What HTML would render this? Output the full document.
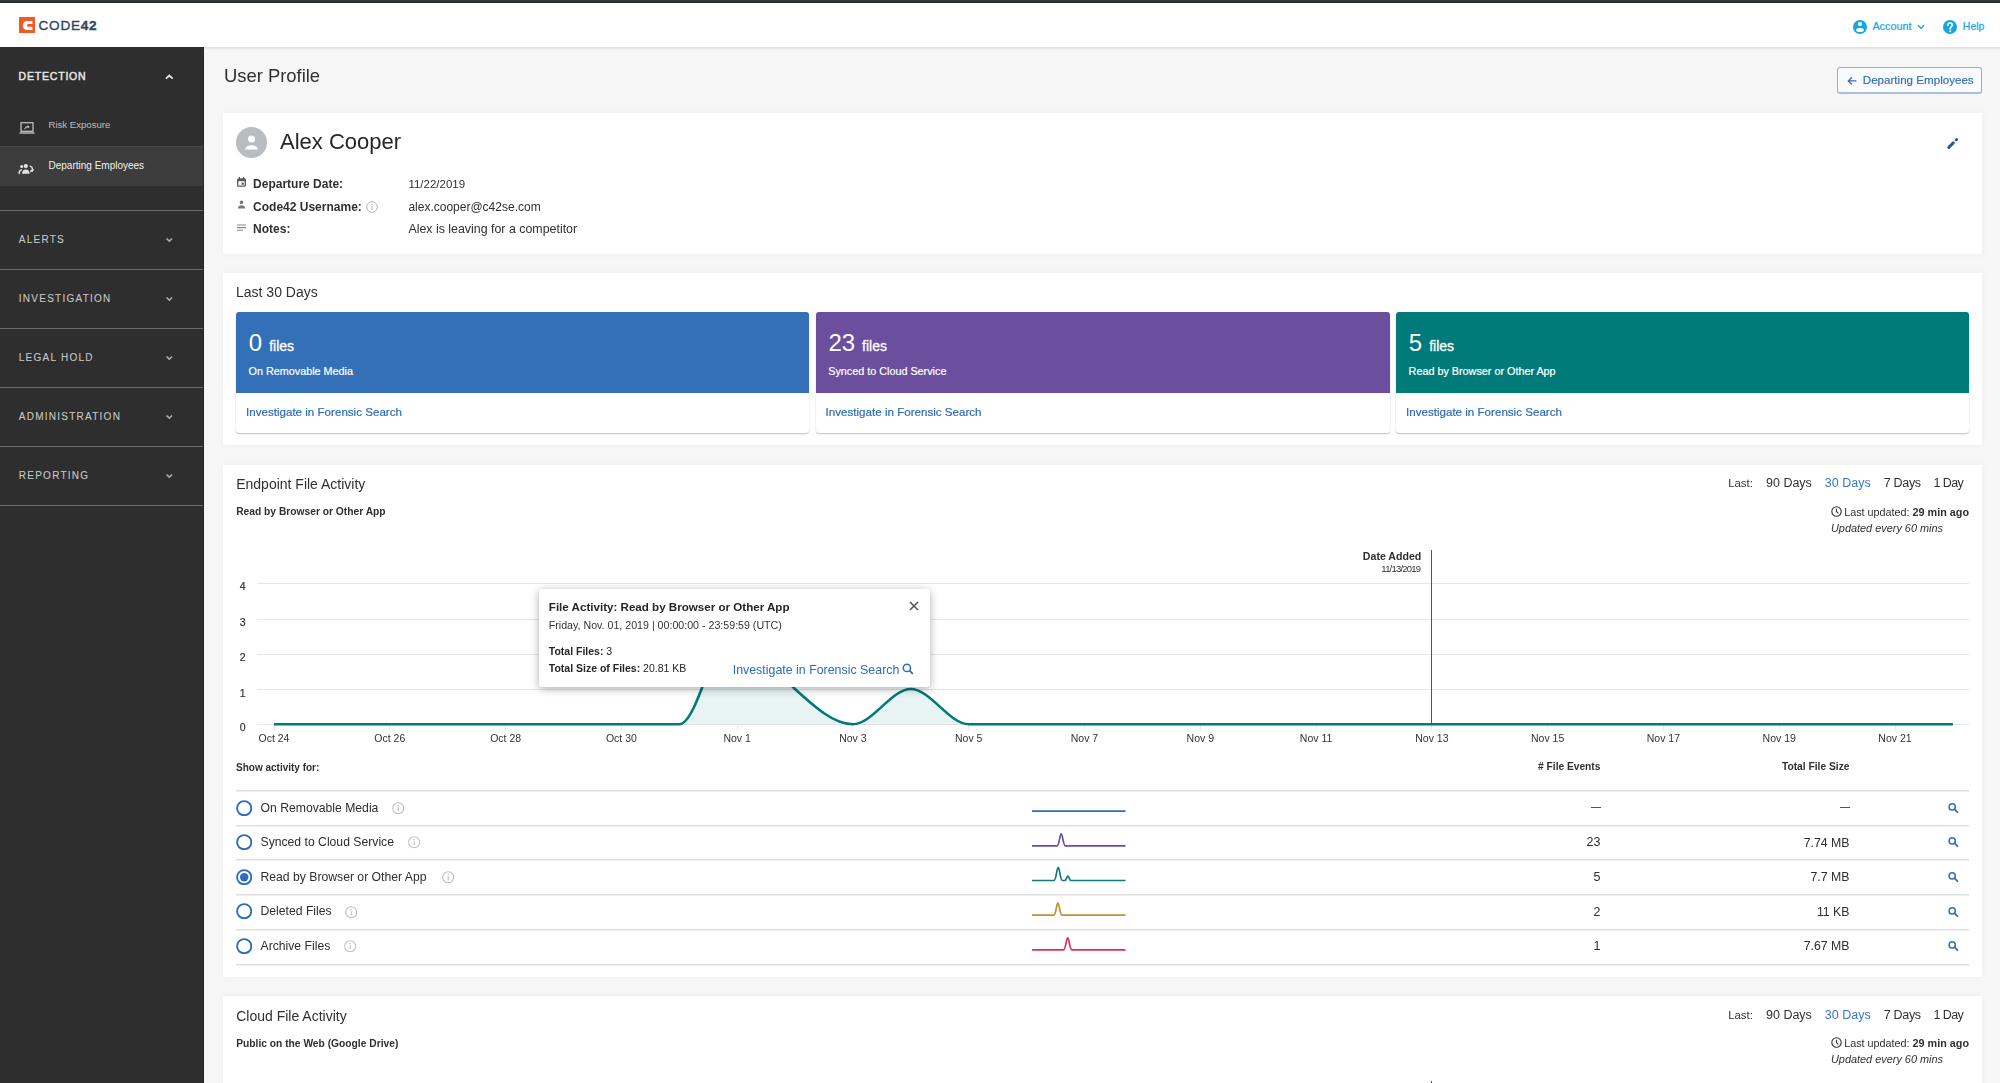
<!DOCTYPE html>
<html><head><meta charset="utf-8"><title>Code42 User Profile</title>
<style>
html,body{margin:0;padding:0;}
body{width:2000px;height:1083px;overflow:hidden;position:relative;background:#f6f6f6;font-family:"Liberation Sans",sans-serif;}
.t{position:absolute;white-space:nowrap;}
b{font-weight:700;}
</style></head><body>
<div id="pg" style="position:absolute;left:0;top:0;width:2000px;height:1083px;filter:blur(0.35px)">
<div style="position:absolute;left:0px;top:0px;width:2000px;height:3.3px;background:linear-gradient(#3b4043,#1f2325)"></div>
<div style="position:absolute;left:0px;top:3px;width:2000px;height:44px;background:#fff"></div>
<div style="position:absolute;left:204px;top:47px;width:1796px;height:2.5px;background:linear-gradient(#dedede,#f1f1f1)"></div>
<svg style="position:absolute;left:19px;top:17px" width="16" height="16" viewBox="0 0 16 16">
<rect width="16" height="16" fill="#f15a24"/>
<path d="M13.4 4 L8.4 4 C5.5 4 3.8 6 3.8 8.5 C3.8 11 5.5 13 8.4 13 L13.4 13 L13.4 9.8 L9.4 9.8 C8.6 9.8 8.1 9.2 8.1 8.4 C8.1 7.6 8.6 7.1 9.4 7.1 L13.4 7.1 Z" fill="#fff"/>
</svg>
<div class="t" style="left:38.5px;top:19.0px;font-size:13.6px;line-height:13.6px;color:#33475b;letter-spacing:0.75px;-webkit-text-stroke:0.35px #33475b">CODE<b style="font-weight:700">42</b></div>
<svg style="position:absolute;left:1853px;top:19.5px" width="14" height="14" viewBox="0 0 14 14">
<circle cx="7" cy="7" r="7" fill="#14a6e2"/>
<circle cx="7" cy="4.1" r="2.1" fill="#fff"/>
<ellipse cx="7" cy="10.1" rx="3.9" ry="2.0" fill="#fff"/>
</svg>
<div class="t" style="left:1872.4px;top:20.7px;font-size:10.8px;line-height:10.8px;color:#14a6e2;-webkit-text-stroke:0.2px #14a6e2">Account</div>
<svg style="position:absolute;left:1917px;top:23.5px" width="8" height="6" viewBox="0 0 8 6"><path d="M1 1.2 L4 4.2 L7 1.2" stroke="#14a6e2" stroke-width="1.4" fill="none"/></svg>
<svg style="position:absolute;left:1943px;top:19.5px" width="14" height="14" viewBox="0 0 14 14">
<circle cx="7" cy="7" r="7" fill="#14a6e2"/>
<path d="M4.9 5.2 C4.9 3.8 5.9 3.0 7.1 3.0 C8.4 3.0 9.3 3.9 9.3 5.0 C9.3 6.5 7.2 6.8 7.2 8.7" stroke="#fff" stroke-width="1.7" fill="none" stroke-linecap="round"/>
<circle cx="7.2" cy="11.3" r="1.0" fill="#fff"/>
</svg>
<div class="t" style="left:1962.8px;top:20.9px;font-size:10.5px;line-height:10.5px;color:#14a6e2;-webkit-text-stroke:0.2px #14a6e2">Help</div>
<div style="position:absolute;left:0px;top:47px;width:204px;height:1036px;background:#2e2e2e"></div>
<div class="t" style="left:18.6px;top:70.7px;font-size:10.5px;line-height:10.5px;color:#e6e6e6;letter-spacing:0.8px;-webkit-text-stroke:0.45px #e6e6e6">DETECTION</div>
<svg style="position:absolute;left:165px;top:73.5px" width="9" height="6" viewBox="0 0 9 6"><path d="M0.9 4.6 L4.3 1.5 L7.7 4.6" stroke="#e4e4e4" stroke-width="1.8" fill="none"/></svg>
<svg style="position:absolute;left:18.5px;top:122px" width="16" height="12" viewBox="0 0 16 12">
<rect x="2" y="0.7" width="12" height="8.6" fill="none" stroke="#bdbdbd" stroke-width="1.3"/>
<path d="M0.5 11 L15.5 11" stroke="#bdbdbd" stroke-width="1.4"/>
<path d="M5.5 7 L7.5 4.8 L9.5 4.8 M8.6 3.6 L9.8 4.8 L8.6 6" stroke="#bdbdbd" stroke-width="1.1" fill="none"/>
</svg>
<div class="t" style="left:48.5px;top:120.2px;font-size:9.6px;line-height:9.6px;color:#bdbdbd;">Risk Exposure</div>
<div style="position:absolute;left:0px;top:146px;width:202.5px;height:40px;background:#3d3d3d"></div>
<div style="position:absolute;left:0px;top:146px;width:202.5px;height:1.2px;background:#474747"></div>
<svg style="position:absolute;left:18px;top:161.5px" width="17" height="13" viewBox="0 0 17 13">
<circle cx="7.8" cy="4.1" r="2.1" fill="#e2e2e2"/>
<path d="M3.9 11.8 C4.1 9.1 5.7 7.6 7.8 7.6 C9.9 7.6 11.5 9.1 11.7 11.8 Z" fill="#e2e2e2"/>
<circle cx="3.7" cy="4.6" r="1.5" fill="#e2e2e2"/>
<path d="M1.1 11.4 C1.2 9.5 2 8.3 3.3 8.1" stroke="#e2e2e2" stroke-width="1.5" fill="none" stroke-linecap="round"/>
<path d="M12.2 4.2 C13.6 4.6 14.4 5.6 14.4 7 C14.4 8.2 13.8 9 12.8 9.6" stroke="#e2e2e2" stroke-width="1.4" fill="none" stroke-linecap="round"/>
<path d="M15.6 7.4 L14.4 9.2 L12.6 8.4" stroke="#e2e2e2" stroke-width="1.1" fill="none"/>
</svg>
<div class="t" style="left:48.5px;top:160.5px;font-size:10px;line-height:10px;color:#f2f2f2;">Departing Employees</div>
<div style="position:absolute;left:0px;top:210.3px;width:204px;height:1.2px;background:#6c6c6c"></div>
<div class="t" style="left:18.8px;top:234.8px;font-size:10.0px;line-height:10.0px;color:#c6c6c6;letter-spacing:1.25px;-webkit-text-stroke:0.1px #c6c6c6">ALERTS</div>
<svg style="position:absolute;left:165px;top:237.3px" width="9" height="6" viewBox="0 0 9 6"><path d="M1.5 1.5 L4.3 4.2 L7.1 1.5" stroke="#ababab" stroke-width="1.6" fill="none"/></svg>
<div style="position:absolute;left:0px;top:269.3px;width:204px;height:1.2px;background:#6c6c6c"></div>
<div class="t" style="left:18.8px;top:293.8px;font-size:10.0px;line-height:10.0px;color:#c6c6c6;letter-spacing:1.25px;-webkit-text-stroke:0.1px #c6c6c6">INVESTIGATION</div>
<svg style="position:absolute;left:165px;top:296.3px" width="9" height="6" viewBox="0 0 9 6"><path d="M1.5 1.5 L4.3 4.2 L7.1 1.5" stroke="#ababab" stroke-width="1.6" fill="none"/></svg>
<div style="position:absolute;left:0px;top:328.3px;width:204px;height:1.2px;background:#6c6c6c"></div>
<div class="t" style="left:18.8px;top:352.8px;font-size:10.0px;line-height:10.0px;color:#c6c6c6;letter-spacing:1.25px;-webkit-text-stroke:0.1px #c6c6c6">LEGAL HOLD</div>
<svg style="position:absolute;left:165px;top:355.3px" width="9" height="6" viewBox="0 0 9 6"><path d="M1.5 1.5 L4.3 4.2 L7.1 1.5" stroke="#ababab" stroke-width="1.6" fill="none"/></svg>
<div style="position:absolute;left:0px;top:387.3px;width:204px;height:1.2px;background:#6c6c6c"></div>
<div class="t" style="left:18.8px;top:411.8px;font-size:10.0px;line-height:10.0px;color:#c6c6c6;letter-spacing:1.25px;-webkit-text-stroke:0.1px #c6c6c6">ADMINISTRATION</div>
<svg style="position:absolute;left:165px;top:414.3px" width="9" height="6" viewBox="0 0 9 6"><path d="M1.5 1.5 L4.3 4.2 L7.1 1.5" stroke="#ababab" stroke-width="1.6" fill="none"/></svg>
<div style="position:absolute;left:0px;top:446.3px;width:204px;height:1.2px;background:#6c6c6c"></div>
<div class="t" style="left:18.8px;top:470.8px;font-size:10.0px;line-height:10.0px;color:#c6c6c6;letter-spacing:1.25px;-webkit-text-stroke:0.1px #c6c6c6">REPORTING</div>
<svg style="position:absolute;left:165px;top:473.3px" width="9" height="6" viewBox="0 0 9 6"><path d="M1.5 1.5 L4.3 4.2 L7.1 1.5" stroke="#ababab" stroke-width="1.6" fill="none"/></svg>
<div style="position:absolute;left:0px;top:505.3px;width:204px;height:1.2px;background:#6c6c6c"></div>
<div style="position:absolute;left:202.5px;top:47px;width:1.5px;height:1036px;background:#262626"></div>
<div class="t" style="left:224.0px;top:67.2px;font-size:18.4px;line-height:18.4px;color:#303030;">User Profile</div>
<div style="position:absolute;left:1837px;top:67px;width:145px;height:27.4px;box-sizing:border-box;border:1px solid #8db0da;border-bottom:2px solid #a9c1de;border-radius:3px;background:#f9fafc"></div>
<svg style="position:absolute;left:1847px;top:75.5px" width="10" height="10" viewBox="0 0 10 10"><path d="M9.4 4.9 L1.4 4.9 M4.9 1.3 L1.3 4.9 L4.9 8.5" stroke="#2f6cb6" stroke-width="1.25" fill="none"/></svg>
<div class="t" style="left:1862.8px;top:74.2px;font-size:11.6px;line-height:11.6px;color:#2f6cb6;-webkit-text-stroke:0.15px #2f6cb6">Departing Employees</div>
<div style="position:absolute;left:223px;top:113px;width:1759px;height:140.6px;background:#fff;box-shadow:0 0 7px rgba(0,0,0,0.045)"></div>
<svg style="position:absolute;left:235.5px;top:126.5px" width="31" height="31" viewBox="0 0 31 31">
<circle cx="15.5" cy="15.5" r="15.5" fill="#b9bdc1"/>
<circle cx="15.5" cy="12" r="3.6" fill="#fff"/>
<path d="M9.2 22.5 C9.6 19.6 12 18.3 15.5 18.3 C19 18.3 21.4 19.6 21.8 22.5 Z" fill="#fff"/>
</svg>
<div class="t" style="left:280.0px;top:131.0px;font-size:22px;line-height:22px;color:#262626;">Alex Cooper</div>
<svg style="position:absolute;left:1946px;top:137px" width="13" height="13" viewBox="0 0 13 13"><path d="M2.7 10.5 L7.3 5.9" stroke="#2356a6" stroke-width="3" stroke-linecap="round"/><path d="M10.1 3.1 L10.7 2.5" stroke="#2356a6" stroke-width="2.6" stroke-linecap="round"/></svg>
<div class="t" style="left:253.1px;top:178.0px;font-size:12px;line-height:12px;font-weight:700;color:#303030;">Departure Date:</div>
<div class="t" style="left:408.4px;top:178.5px;font-size:11.5px;line-height:11.5px;color:#303030;">11/22/2019</div>
<div class="t" style="left:253.1px;top:200.6px;font-size:12px;line-height:12px;font-weight:700;color:#303030;">Code42 Username:</div>
<div class="t" style="left:408.4px;top:200.6px;font-size:12px;line-height:12px;color:#303030;">alex.cooper@c42se.com</div>
<div class="t" style="left:253.1px;top:223.0px;font-size:12px;line-height:12px;font-weight:700;color:#303030;">Notes:</div>
<div class="t" style="left:408.4px;top:222.7px;font-size:12.4px;line-height:12.4px;color:#303030;">Alex is leaving for a competitor</div>
<svg style="position:absolute;left:237px;top:176.6px" width="9" height="10" viewBox="0 0 9 10"><rect x="0.7" y="2.2" width="7.6" height="7" rx="0.8" fill="none" stroke="#5a5a5a" stroke-width="1.3"/><rect x="0.7" y="1.6" width="7.6" height="2.6" fill="#5a5a5a"/><rect x="1.8" y="0" width="1.2" height="2" fill="#5a5a5a"/><rect x="6" y="0" width="1.2" height="2" fill="#5a5a5a"/><rect x="4.6" y="5.6" width="2.2" height="2.2" fill="#5a5a5a"/></svg>
<svg style="position:absolute;left:237px;top:200px" width="9" height="9" viewBox="0 0 9 9"><circle cx="4.5" cy="2.4" r="1.8" fill="#777"/><path d="M0.8 8.5 C1 6 2.6 5.2 4.5 5.2 C6.4 5.2 8 6 8.2 8.5Z" fill="#777"/></svg>
<svg style="position:absolute;left:237px;top:224px" width="9" height="8" viewBox="0 0 9 8"><path d="M0 1 H9 M0 3.6 H9 M0 6.2 H6" stroke="#888" stroke-width="1.1"/></svg>
<svg style="position:absolute;left:366px;top:201px" width="12" height="12" viewBox="0 0 12 12"><circle cx="6" cy="6" r="5.3" fill="none" stroke="#b5b5b5" stroke-width="1"/><path d="M6 5.2 V9" stroke="#b5b5b5" stroke-width="1.1"/><circle cx="6" cy="3.4" r="0.7" fill="#b5b5b5"/></svg>
<div style="position:absolute;left:223px;top:273px;width:1759px;height:172px;background:#fff;box-shadow:0 0 7px rgba(0,0,0,0.045)"></div>
<div class="t" style="left:236.0px;top:284.9px;font-size:14px;line-height:14px;color:#303030;">Last 30 Days</div>
<div style="position:absolute;left:236px;top:312px;width:573px;height:121px;background:#fff;border-radius:3px;box-shadow:0 1px 1.5px rgba(0,0,0,0.26)"></div>
<div style="position:absolute;left:236px;top:312px;width:573px;height:80.5px;background:#3470b8;border-radius:3px 3px 0 0"></div>
<div class="t" style="left:248.8px;top:331.3px;font-size:24px;line-height:24px;color:#fff;">0<span style="font-size:14px;margin-left:7px;-webkit-text-stroke:0.3px #fff">files</span></div>
<div class="t" style="left:248.6px;top:365.8px;font-size:10.8px;line-height:10.8px;color:#fff;-webkit-text-stroke:0.2px #fff">On Removable Media</div>
<div class="t" style="left:246.0px;top:405.9px;font-size:11.6px;line-height:11.6px;color:#2f6cb6;-webkit-text-stroke:0.2px #2f6cb6">Investigate in Forensic Search</div>
<div style="position:absolute;left:815.6px;top:312px;width:574px;height:121px;background:#fff;border-radius:3px;box-shadow:0 1px 1.5px rgba(0,0,0,0.26)"></div>
<div style="position:absolute;left:815.6px;top:312px;width:574px;height:80.5px;background:#6c4e9e;border-radius:3px 3px 0 0"></div>
<div class="t" style="left:828.4px;top:331.3px;font-size:24px;line-height:24px;color:#fff;">23<span style="font-size:14px;margin-left:7px;-webkit-text-stroke:0.3px #fff">files</span></div>
<div class="t" style="left:828.2px;top:365.8px;font-size:10.8px;line-height:10.8px;color:#fff;-webkit-text-stroke:0.2px #fff">Synced to Cloud Service</div>
<div class="t" style="left:825.6px;top:405.9px;font-size:11.6px;line-height:11.6px;color:#2f6cb6;-webkit-text-stroke:0.2px #2f6cb6">Investigate in Forensic Search</div>
<div style="position:absolute;left:1396px;top:312px;width:573.2px;height:121px;background:#fff;border-radius:3px;box-shadow:0 1px 1.5px rgba(0,0,0,0.26)"></div>
<div style="position:absolute;left:1396px;top:312px;width:573.2px;height:80.5px;background:#007b79;border-radius:3px 3px 0 0"></div>
<div class="t" style="left:1408.8px;top:331.3px;font-size:24px;line-height:24px;color:#fff;">5<span style="font-size:14px;margin-left:7px;-webkit-text-stroke:0.3px #fff">files</span></div>
<div class="t" style="left:1408.6px;top:365.8px;font-size:10.8px;line-height:10.8px;color:#fff;-webkit-text-stroke:0.2px #fff">Read by Browser or Other App</div>
<div class="t" style="left:1406.0px;top:405.9px;font-size:11.6px;line-height:11.6px;color:#2f6cb6;-webkit-text-stroke:0.2px #2f6cb6">Investigate in Forensic Search</div>
<div style="position:absolute;left:223px;top:465px;width:1759px;height:512px;background:#fff;box-shadow:0 0 7px rgba(0,0,0,0.045)"></div>
<div class="t" style="left:236.2px;top:477.3px;font-size:14px;line-height:14px;color:#303030;">Endpoint File Activity</div>
<div class="t" style="left:236.2px;top:507.3px;font-size:10.25px;line-height:10.25px;font-weight:700;color:#303030;">Read by Browser or Other App</div>
<div class="t" style="left:1728.2px;top:478.3px;font-size:11.4px;line-height:11.4px;color:#303030;">Last:</div>
<div class="t" style="left:1766.0px;top:477.4px;font-size:12.5px;line-height:12.5px;color:#303030;">90 Days</div>
<div class="t" style="left:1824.8px;top:477.4px;font-size:12.5px;line-height:12.5px;color:#3a78c4;">30 Days</div>
<div class="t" style="left:1883.7px;top:477.4px;font-size:12.5px;line-height:12.5px;color:#303030;letter-spacing:-0.3px">7 Days</div>
<div class="t" style="left:1933.4px;top:477.4px;font-size:12.5px;line-height:12.5px;color:#303030;letter-spacing:-0.55px">1 Day</div>
<svg style="position:absolute;left:1831px;top:506px" width="11" height="11" viewBox="0 0 11 11"><circle cx="5.5" cy="5.5" r="4.7" fill="none" stroke="#333" stroke-width="1.1"/><path d="M5.5 2.8 V5.6 L7.4 7.4" stroke="#333" stroke-width="1.1" fill="none"/></svg>
<div class="t" style="right:31.0px;top:506.5px;font-size:10.8px;line-height:10.8px;color:#303030;">Last updated: <b>29 min ago</b></div>
<div class="t" style="left:1831.0px;top:523.2px;font-size:10.9px;line-height:10.9px;color:#303030;font-style:italic">Updated every 60 mins</div>
<div style="position:absolute;left:256.6px;top:723.7px;width:1712.4px;height:1px;background:#e6e6e6"></div>
<div class="t" style="right:1754.4px;top:721.9px;font-size:10.5px;line-height:10.5px;color:#333;-webkit-text-stroke:0.2px #333">0</div>
<div style="position:absolute;left:256.6px;top:689.3px;width:1712.4px;height:1px;background:#e6e6e6"></div>
<div class="t" style="right:1754.4px;top:687.5px;font-size:10.5px;line-height:10.5px;color:#333;-webkit-text-stroke:0.2px #333">1</div>
<div style="position:absolute;left:256.6px;top:654.0px;width:1712.4px;height:1px;background:#e6e6e6"></div>
<div class="t" style="right:1754.4px;top:652.2px;font-size:10.5px;line-height:10.5px;color:#333;-webkit-text-stroke:0.2px #333">2</div>
<div style="position:absolute;left:256.6px;top:619.1px;width:1712.4px;height:1px;background:#e6e6e6"></div>
<div class="t" style="right:1754.4px;top:617.3px;font-size:10.5px;line-height:10.5px;color:#333;-webkit-text-stroke:0.2px #333">3</div>
<div style="position:absolute;left:256.6px;top:582.9px;width:1712.4px;height:1px;background:#e6e6e6"></div>
<div class="t" style="right:1754.4px;top:581.1px;font-size:10.5px;line-height:10.5px;color:#333;-webkit-text-stroke:0.2px #333">4</div>
<div style="position:absolute;left:273.5px;top:724.5px;width:1px;height:5px;background:#e6e6e6"></div>
<div class="t" style="left:74.0px;width:400px;text-align:center;top:733.3px;font-size:10.5px;line-height:10.5px;color:#333;">Oct 24</div>
<div style="position:absolute;left:389.3px;top:724.5px;width:1px;height:5px;background:#e6e6e6"></div>
<div class="t" style="left:189.8px;width:400px;text-align:center;top:733.3px;font-size:10.5px;line-height:10.5px;color:#333;">Oct 26</div>
<div style="position:absolute;left:505.1px;top:724.5px;width:1px;height:5px;background:#e6e6e6"></div>
<div class="t" style="left:305.6px;width:400px;text-align:center;top:733.3px;font-size:10.5px;line-height:10.5px;color:#333;">Oct 28</div>
<div style="position:absolute;left:620.9px;top:724.5px;width:1px;height:5px;background:#e6e6e6"></div>
<div class="t" style="left:421.4px;width:400px;text-align:center;top:733.3px;font-size:10.5px;line-height:10.5px;color:#333;">Oct 30</div>
<div style="position:absolute;left:736.6px;top:724.5px;width:1px;height:5px;background:#e6e6e6"></div>
<div class="t" style="left:537.1px;width:400px;text-align:center;top:733.3px;font-size:10.5px;line-height:10.5px;color:#333;">Nov 1</div>
<div style="position:absolute;left:852.4px;top:724.5px;width:1px;height:5px;background:#e6e6e6"></div>
<div class="t" style="left:652.9px;width:400px;text-align:center;top:733.3px;font-size:10.5px;line-height:10.5px;color:#333;">Nov 3</div>
<div style="position:absolute;left:968.2px;top:724.5px;width:1px;height:5px;background:#e6e6e6"></div>
<div class="t" style="left:768.7px;width:400px;text-align:center;top:733.3px;font-size:10.5px;line-height:10.5px;color:#333;">Nov 5</div>
<div style="position:absolute;left:1084.0px;top:724.5px;width:1px;height:5px;background:#e6e6e6"></div>
<div class="t" style="left:884.5px;width:400px;text-align:center;top:733.3px;font-size:10.5px;line-height:10.5px;color:#333;">Nov 7</div>
<div style="position:absolute;left:1199.8px;top:724.5px;width:1px;height:5px;background:#e6e6e6"></div>
<div class="t" style="left:1000.3px;width:400px;text-align:center;top:733.3px;font-size:10.5px;line-height:10.5px;color:#333;">Nov 9</div>
<div style="position:absolute;left:1315.6px;top:724.5px;width:1px;height:5px;background:#e6e6e6"></div>
<div class="t" style="left:1116.1px;width:400px;text-align:center;top:733.3px;font-size:10.5px;line-height:10.5px;color:#333;">Nov 11</div>
<div style="position:absolute;left:1431.4px;top:724.5px;width:1px;height:5px;background:#e6e6e6"></div>
<div class="t" style="left:1231.9px;width:400px;text-align:center;top:733.3px;font-size:10.5px;line-height:10.5px;color:#333;">Nov 13</div>
<div style="position:absolute;left:1547.1px;top:724.5px;width:1px;height:5px;background:#e6e6e6"></div>
<div class="t" style="left:1347.6px;width:400px;text-align:center;top:733.3px;font-size:10.5px;line-height:10.5px;color:#333;">Nov 15</div>
<div style="position:absolute;left:1662.9px;top:724.5px;width:1px;height:5px;background:#e6e6e6"></div>
<div class="t" style="left:1463.4px;width:400px;text-align:center;top:733.3px;font-size:10.5px;line-height:10.5px;color:#333;">Nov 17</div>
<div style="position:absolute;left:1778.7px;top:724.5px;width:1px;height:5px;background:#e6e6e6"></div>
<div class="t" style="left:1579.2px;width:400px;text-align:center;top:733.3px;font-size:10.5px;line-height:10.5px;color:#333;">Nov 19</div>
<div style="position:absolute;left:1894.5px;top:724.5px;width:1px;height:5px;background:#e6e6e6"></div>
<div class="t" style="left:1695.0px;width:400px;text-align:center;top:733.3px;font-size:10.5px;line-height:10.5px;color:#333;">Nov 21</div>
<svg style="position:absolute;left:0;top:0" width="2000" height="1083"><path d="M274.0,724.2 C293.3,724.2 312.6,724.2 331.9,724.2 C351.2,724.2 370.5,724.2 389.8,724.2 C409.1,724.2 428.4,724.2 447.7,724.2 C467.0,724.2 486.3,724.2 505.6,724.2 C524.9,724.2 544.2,724.2 563.5,724.2 C582.8,724.2 602.1,724.2 621.4,724.2 C640.7,724.2 660.0,724.2 679.3,724.2 C698.5,724.2 717.8,618.5 737.1,618.5 C756.4,618.5 775.7,671.4 795.0,689.0 C814.3,706.6 833.6,724.2 852.9,724.2 C872.2,724.2 891.5,689.0 910.8,689.0 C930.1,689.0 949.4,724.2 968.7,724.2 C988.0,724.2 1007.3,724.2 1026.6,724.2 C1045.9,724.2 1065.2,724.2 1084.5,724.2 C1103.8,724.2 1123.1,724.2 1142.4,724.2 C1161.7,724.2 1181.0,724.2 1200.3,724.2 C1219.6,724.2 1238.9,724.2 1258.2,724.2 C1277.5,724.2 1296.8,724.2 1316.1,724.2 C1335.4,724.2 1354.7,724.2 1374.0,724.2 C1393.3,724.2 1412.6,724.2 1431.9,724.2 C1451.2,724.2 1470.5,724.2 1489.8,724.2 C1509.1,724.2 1528.3,724.2 1547.6,724.2 C1566.9,724.2 1586.2,724.2 1605.5,724.2 C1624.8,724.2 1644.1,724.2 1663.4,724.2 C1682.7,724.2 1702.0,724.2 1721.3,724.2 C1740.6,724.2 1759.9,724.2 1779.2,724.2 C1798.5,724.2 1817.8,724.2 1837.1,724.2 C1856.4,724.2 1875.7,724.2 1895.0,724.2 C1914.3,724.2 1933.6,724.2 1952.9,724.2 L1952.9,724.2 L274.0,724.2 Z" fill="rgba(0,123,121,0.09)"/><path d="M274.0,724.2 C293.3,724.2 312.6,724.2 331.9,724.2 C351.2,724.2 370.5,724.2 389.8,724.2 C409.1,724.2 428.4,724.2 447.7,724.2 C467.0,724.2 486.3,724.2 505.6,724.2 C524.9,724.2 544.2,724.2 563.5,724.2 C582.8,724.2 602.1,724.2 621.4,724.2 C640.7,724.2 660.0,724.2 679.3,724.2 C698.5,724.2 717.8,618.5 737.1,618.5 C756.4,618.5 775.7,671.4 795.0,689.0 C814.3,706.6 833.6,724.2 852.9,724.2 C872.2,724.2 891.5,689.0 910.8,689.0 C930.1,689.0 949.4,724.2 968.7,724.2 C988.0,724.2 1007.3,724.2 1026.6,724.2 C1045.9,724.2 1065.2,724.2 1084.5,724.2 C1103.8,724.2 1123.1,724.2 1142.4,724.2 C1161.7,724.2 1181.0,724.2 1200.3,724.2 C1219.6,724.2 1238.9,724.2 1258.2,724.2 C1277.5,724.2 1296.8,724.2 1316.1,724.2 C1335.4,724.2 1354.7,724.2 1374.0,724.2 C1393.3,724.2 1412.6,724.2 1431.9,724.2 C1451.2,724.2 1470.5,724.2 1489.8,724.2 C1509.1,724.2 1528.3,724.2 1547.6,724.2 C1566.9,724.2 1586.2,724.2 1605.5,724.2 C1624.8,724.2 1644.1,724.2 1663.4,724.2 C1682.7,724.2 1702.0,724.2 1721.3,724.2 C1740.6,724.2 1759.9,724.2 1779.2,724.2 C1798.5,724.2 1817.8,724.2 1837.1,724.2 C1856.4,724.2 1875.7,724.2 1895.0,724.2 C1914.3,724.2 1933.6,724.2 1952.9,724.2" fill="none" stroke="#007b79" stroke-width="2.6" stroke-linecap="butt"/></svg>
<div style="position:absolute;left:1431px;top:550px;width:1.2px;height:175px;background:#555"></div>
<div class="t" style="right:578.7px;top:551.0px;font-size:10.6px;line-height:10.6px;font-weight:700;color:#303030;">Date Added</div>
<div class="t" style="right:579.8px;top:564.2px;font-size:9.5px;line-height:9.5px;color:#333;letter-spacing:-0.8px">11/13/2019</div>
<div style="position:absolute;left:538.8px;top:589.4px;width:391.5px;height:97.6px;background:#fff;border-radius:3px;box-shadow:0 2px 8px rgba(0,0,0,0.32)"></div>
<div class="t" style="left:548.8px;top:601.3px;font-size:11.6px;line-height:11.6px;font-weight:700;color:#262626;">File Activity: Read by Browser or Other App</div>
<svg style="position:absolute;left:909px;top:600.5px" width="10" height="10" viewBox="0 0 10 10"><path d="M1 1 L9 9 M9 1 L1 9" stroke="#585858" stroke-width="1.6"/></svg>
<div class="t" style="left:548.8px;top:620.0px;font-size:10.65px;line-height:10.65px;color:#333;">Friday, Nov. 01, 2019 | 00:00:00 - 23:59:59 (UTC)</div>
<div class="t" style="left:548.8px;top:646.1px;font-size:10.5px;line-height:10.5px;color:#262626;"><b>Total Files:</b> 3</div>
<div class="t" style="left:548.8px;top:663.3px;font-size:10.5px;line-height:10.5px;color:#262626;"><b>Total Size of Files:</b> 20.81 KB</div>
<div class="t" style="left:732.7px;top:663.5px;font-size:12.4px;line-height:12.4px;color:#2f6cb6;">Investigate in Forensic Search</div>
<svg style="position:absolute;left:902px;top:663px" width="12" height="12" viewBox="0 0 12 12"><circle cx="4.9" cy="4.9" r="3.6" fill="none" stroke="#2f6cb6" stroke-width="1.5"/><path d="M7.6 7.6 L10.8 10.8" stroke="#2f6cb6" stroke-width="1.8"/></svg>
<div class="t" style="left:236.0px;top:762.9px;font-size:10px;line-height:10px;font-weight:700;color:#303030;">Show activity for:</div>
<div class="t" style="right:399.6px;top:762.0px;font-size:10.2px;line-height:10.2px;font-weight:700;color:#303030;"># File Events</div>
<div class="t" style="right:150.5px;top:761.9px;font-size:10.25px;line-height:10.25px;font-weight:700;color:#303030;">Total File Size</div>
<div style="position:absolute;left:236px;top:790px;width:1733px;height:1px;background:#dedede"></div>
<div style="position:absolute;left:236px;top:791px;width:1733px;height:0.6px;background:#efefef"></div>
<div style="position:absolute;left:236px;top:825px;width:1733px;height:1px;background:#dedede"></div>
<div style="position:absolute;left:236px;top:826px;width:1733px;height:0.6px;background:#efefef"></div>
<div style="position:absolute;left:236px;top:859px;width:1733px;height:1px;background:#dedede"></div>
<div style="position:absolute;left:236px;top:860px;width:1733px;height:0.6px;background:#efefef"></div>
<div style="position:absolute;left:236px;top:894px;width:1733px;height:1px;background:#dedede"></div>
<div style="position:absolute;left:236px;top:895px;width:1733px;height:0.6px;background:#efefef"></div>
<div style="position:absolute;left:236px;top:929px;width:1733px;height:1px;background:#dedede"></div>
<div style="position:absolute;left:236px;top:930px;width:1733px;height:0.6px;background:#efefef"></div>
<div style="position:absolute;left:236px;top:964px;width:1733px;height:1px;background:#dedede"></div>
<div style="position:absolute;left:236px;top:965px;width:1733px;height:0.6px;background:#efefef"></div>
<svg style="position:absolute;left:235.5px;top:799.5px" width="16.4" height="16.4" viewBox="0 0 16.4 16.4"><circle cx="8.2" cy="8.2" r="7.1" fill="none" stroke="#2f6cc0" stroke-width="1.9"/></svg>
<div class="t" style="left:260.5px;top:801.5px;font-size:12.2px;line-height:12.2px;color:#2e2e2e;">On Removable Media</div>
<svg style="position:absolute;left:391.7px;top:801.7px" width="12.4" height="12.4" viewBox="0 0 12 12"><circle cx="6" cy="6" r="5.3" fill="none" stroke="#bdbdbd" stroke-width="1"/><path d="M6 5.2 V9" stroke="#bdbdbd" stroke-width="1.1"/><circle cx="6" cy="3.4" r="0.7" fill="#bdbdbd"/></svg>
<svg style="position:absolute;left:0;top:0;overflow:visible" width="1" height="1"><path d="M1032,811.1 L1125.5,811.1" fill="none" stroke="#2f6bc0" stroke-width="1.7"/></svg>
<div style="position:absolute;left:1590.5px;top:807.4px;width:10px;height:1.1px;background:#555"></div>
<div style="position:absolute;left:1839.5px;top:807.4px;width:10px;height:1.1px;background:#555"></div>
<svg style="position:absolute;left:1946.5px;top:801.7px" width="12" height="12" viewBox="0 0 12 12"><circle cx="5.2" cy="4.9" r="3.1" fill="none" stroke="#3570bb" stroke-width="1.5"/><path d="M7.4 7.2 L10.4 10.2" stroke="#3570bb" stroke-width="1.8" stroke-linecap="round"/></svg>
<svg style="position:absolute;left:235.5px;top:834.1px" width="16.4" height="16.4" viewBox="0 0 16.4 16.4"><circle cx="8.2" cy="8.2" r="7.1" fill="none" stroke="#2f6cc0" stroke-width="1.9"/></svg>
<div class="t" style="left:260.5px;top:836.1px;font-size:12.2px;line-height:12.2px;color:#2e2e2e;">Synced to Cloud Service</div>
<svg style="position:absolute;left:408.1px;top:836.3px" width="12.4" height="12.4" viewBox="0 0 12 12"><circle cx="6" cy="6" r="5.3" fill="none" stroke="#bdbdbd" stroke-width="1"/><path d="M6 5.2 V9" stroke="#bdbdbd" stroke-width="1.1"/><circle cx="6" cy="3.4" r="0.7" fill="#bdbdbd"/></svg>
<svg style="position:absolute;left:0;top:0;overflow:visible" width="1" height="1"><path d="M1032,845.8 L1057.0,845.8 C1059.3,845.8 1059.7,833.8 1061.2,833.8 C1062.7,833.8 1063.1,845.8 1065.4,845.8 L1125.5,845.8" fill="none" stroke="#6b4e9f" stroke-width="1.7"/></svg>
<div class="t" style="right:399.6px;top:836.3px;font-size:12.5px;line-height:12.5px;color:#2e2e2e;">23</div>
<div class="t" style="right:150.5px;top:836.5px;font-size:12.3px;line-height:12.3px;color:#2e2e2e;">7.74 MB</div>
<svg style="position:absolute;left:1946.5px;top:836.3px" width="12" height="12" viewBox="0 0 12 12"><circle cx="5.2" cy="4.9" r="3.1" fill="none" stroke="#3570bb" stroke-width="1.5"/><path d="M7.4 7.2 L10.4 10.2" stroke="#3570bb" stroke-width="1.8" stroke-linecap="round"/></svg>
<svg style="position:absolute;left:235.5px;top:868.7px" width="16.4" height="16.4" viewBox="0 0 16.4 16.4"><circle cx="8.2" cy="8.2" r="7.1" fill="none" stroke="#2f6cc0" stroke-width="1.9"/><circle cx="8.2" cy="8.2" r="4.2" fill="#2f6cc0"/></svg>
<div class="t" style="left:260.5px;top:870.7px;font-size:12.2px;line-height:12.2px;color:#2e2e2e;">Read by Browser or Other App</div>
<svg style="position:absolute;left:441.6px;top:870.9px" width="12.4" height="12.4" viewBox="0 0 12 12"><circle cx="6" cy="6" r="5.3" fill="none" stroke="#bdbdbd" stroke-width="1"/><path d="M6 5.2 V9" stroke="#bdbdbd" stroke-width="1.1"/><circle cx="6" cy="3.4" r="0.7" fill="#bdbdbd"/></svg>
<svg style="position:absolute;left:0;top:0;overflow:visible" width="1" height="1"><path d="M1032,880.5 L1054.0,880.5 C1056.3,880.5 1056.7,867.3 1058.2,867.3 C1059.7,867.3 1060.1,880.5 1062.4,880.5 L1064.7,880.5 C1066.5,880.5 1066.8,876.0 1067.9,876.0 C1069.0,876.0 1069.3,880.5 1071.1,880.5 L1125.5,880.5" fill="none" stroke="#137b7a" stroke-width="1.7"/></svg>
<div class="t" style="right:399.6px;top:870.9px;font-size:12.5px;line-height:12.5px;color:#2e2e2e;">5</div>
<div class="t" style="right:150.5px;top:871.1px;font-size:12.3px;line-height:12.3px;color:#2e2e2e;">7.7 MB</div>
<svg style="position:absolute;left:1946.5px;top:870.9px" width="12" height="12" viewBox="0 0 12 12"><circle cx="5.2" cy="4.9" r="3.1" fill="none" stroke="#3570bb" stroke-width="1.5"/><path d="M7.4 7.2 L10.4 10.2" stroke="#3570bb" stroke-width="1.8" stroke-linecap="round"/></svg>
<svg style="position:absolute;left:235.5px;top:903.3px" width="16.4" height="16.4" viewBox="0 0 16.4 16.4"><circle cx="8.2" cy="8.2" r="7.1" fill="none" stroke="#2f6cc0" stroke-width="1.9"/></svg>
<div class="t" style="left:260.5px;top:905.3px;font-size:12.2px;line-height:12.2px;color:#2e2e2e;">Deleted Files</div>
<svg style="position:absolute;left:344.8px;top:905.5px" width="12.4" height="12.4" viewBox="0 0 12 12"><circle cx="6" cy="6" r="5.3" fill="none" stroke="#bdbdbd" stroke-width="1"/><path d="M6 5.2 V9" stroke="#bdbdbd" stroke-width="1.1"/><circle cx="6" cy="3.4" r="0.7" fill="#bdbdbd"/></svg>
<svg style="position:absolute;left:0;top:0;overflow:visible" width="1" height="1"><path d="M1032,915.2 L1053.7,915.2 C1056.0,915.2 1056.4,903.2 1057.9,903.2 C1059.4,903.2 1059.8,915.2 1062.1,915.2 L1125.5,915.2" fill="none" stroke="#c3902d" stroke-width="1.7"/></svg>
<div class="t" style="right:399.6px;top:905.5px;font-size:12.5px;line-height:12.5px;color:#2e2e2e;">2</div>
<div class="t" style="right:150.5px;top:905.7px;font-size:12.3px;line-height:12.3px;color:#2e2e2e;">11 KB</div>
<svg style="position:absolute;left:1946.5px;top:905.5px" width="12" height="12" viewBox="0 0 12 12"><circle cx="5.2" cy="4.9" r="3.1" fill="none" stroke="#3570bb" stroke-width="1.5"/><path d="M7.4 7.2 L10.4 10.2" stroke="#3570bb" stroke-width="1.8" stroke-linecap="round"/></svg>
<svg style="position:absolute;left:235.5px;top:937.9px" width="16.4" height="16.4" viewBox="0 0 16.4 16.4"><circle cx="8.2" cy="8.2" r="7.1" fill="none" stroke="#2f6cc0" stroke-width="1.9"/></svg>
<div class="t" style="left:260.5px;top:939.9px;font-size:12.2px;line-height:12.2px;color:#2e2e2e;">Archive Files</div>
<svg style="position:absolute;left:343.8px;top:940.1px" width="12.4" height="12.4" viewBox="0 0 12 12"><circle cx="6" cy="6" r="5.3" fill="none" stroke="#bdbdbd" stroke-width="1"/><path d="M6 5.2 V9" stroke="#bdbdbd" stroke-width="1.1"/><circle cx="6" cy="3.4" r="0.7" fill="#bdbdbd"/></svg>
<svg style="position:absolute;left:0;top:0;overflow:visible" width="1" height="1"><path d="M1032,949.9 L1063.5,949.9 C1065.8,949.9 1066.2,937.9 1067.7,937.9 C1069.2,937.9 1069.6,949.9 1071.9,949.9 L1125.5,949.9" fill="none" stroke="#d9325c" stroke-width="1.7"/></svg>
<div class="t" style="right:399.6px;top:940.1px;font-size:12.5px;line-height:12.5px;color:#2e2e2e;">1</div>
<div class="t" style="right:150.5px;top:940.3px;font-size:12.3px;line-height:12.3px;color:#2e2e2e;">7.67 MB</div>
<svg style="position:absolute;left:1946.5px;top:940.1px" width="12" height="12" viewBox="0 0 12 12"><circle cx="5.2" cy="4.9" r="3.1" fill="none" stroke="#3570bb" stroke-width="1.5"/><path d="M7.4 7.2 L10.4 10.2" stroke="#3570bb" stroke-width="1.8" stroke-linecap="round"/></svg>
<div style="position:absolute;left:223px;top:996.3px;width:1759px;height:100px;background:#fff;box-shadow:0 0 7px rgba(0,0,0,0.045)"></div>
<div class="t" style="left:236.2px;top:1008.5px;font-size:14px;line-height:14px;color:#303030;">Cloud File Activity</div>
<div class="t" style="left:236.2px;top:1038.5px;font-size:10.25px;line-height:10.25px;font-weight:700;color:#303030;">Public on the Web (Google Drive)</div>
<div class="t" style="left:1728.2px;top:1009.5px;font-size:11.4px;line-height:11.4px;color:#303030;">Last:</div>
<div class="t" style="left:1766.0px;top:1008.6px;font-size:12.5px;line-height:12.5px;color:#303030;">90 Days</div>
<div class="t" style="left:1824.8px;top:1008.6px;font-size:12.5px;line-height:12.5px;color:#3a78c4;">30 Days</div>
<div class="t" style="left:1883.7px;top:1008.6px;font-size:12.5px;line-height:12.5px;color:#303030;letter-spacing:-0.3px">7 Days</div>
<div class="t" style="left:1933.4px;top:1008.6px;font-size:12.5px;line-height:12.5px;color:#303030;letter-spacing:-0.55px">1 Day</div>
<svg style="position:absolute;left:1831px;top:1037.2px" width="11" height="11" viewBox="0 0 11 11"><circle cx="5.5" cy="5.5" r="4.7" fill="none" stroke="#333" stroke-width="1.1"/><path d="M5.5 2.8 V5.6 L7.4 7.4" stroke="#333" stroke-width="1.1" fill="none"/></svg>
<div class="t" style="right:31.0px;top:1037.7px;font-size:10.8px;line-height:10.8px;color:#303030;">Last updated: <b>29 min ago</b></div>
<div class="t" style="left:1831.0px;top:1054.4px;font-size:10.9px;line-height:10.9px;color:#303030;font-style:italic">Updated every 60 mins</div>
<div style="position:absolute;left:1431px;top:1081px;width:1.2px;height:3px;background:#555"></div>
</div></body></html>
